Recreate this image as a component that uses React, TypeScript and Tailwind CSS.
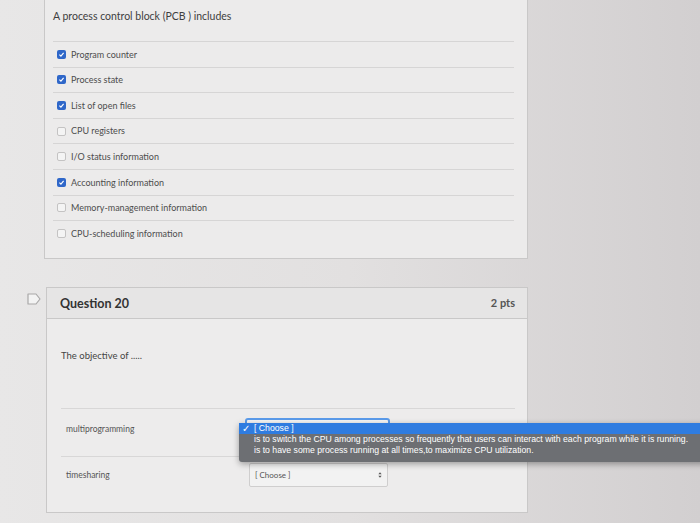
import React from "react";

type Option = { label: string; checked: boolean };

const options: Option[] = [
  { label: "Program counter", checked: true },
  { label: "Process state", checked: true },
  { label: "List of open files", checked: true },
  { label: "CPU registers", checked: false },
  { label: "I/O status information", checked: false },
  { label: "Accounting information", checked: true },
  { label: "Memory-management information", checked: false },
  { label: "CPU-scheduling information", checked: false },
];

const Checkbox = ({ checked }: { checked: boolean }) =>
  checked ? (
    <span className="flex h-[9px] w-[9px] items-center justify-center rounded-[2px] bg-[#2f67c9]">
      <svg viewBox="0 0 10 10" className="h-[7px] w-[7px]">
        <path d="M2 5.2 L4.2 7.4 L8 2.8" fill="none" stroke="#fff" strokeWidth="1.6" />
      </svg>
    </span>
  ) : (
    <span className="h-[9px] w-[9px] rounded-[2px] border border-[#c4c3c3] bg-[#f4f4f4]" />
  );

const App = () => {
  return (
    <div
      className="relative h-[523px] w-[700px] overflow-hidden bg-linear-to-r from-[#e8e7e7] via-[#e2e0e0] to-[#d2cfd0] text-[#444]"
      style={{ fontFamily: "Lato, 'Open Sans', sans-serif" }}
    >
      {/* question 19 */}
      <div className="ml-[44px] w-[484px] border-x border-b border-[#c9c8c8] bg-[#ecebeb] pb-[12px] pl-[8px] pr-[13px]">
        <p className="pt-[8px] text-[10.5px] leading-[16px] text-[#3e3e3e]">A process control block (PCB ) includes</p>
        <ul className="mt-[17px]">
          {options.map((o) => (
            <li key={o.label} className="flex h-[25.6px] items-center gap-[5px] border-t border-[#d6d5d5] pl-[4px]">
              <Checkbox checked={o.checked} />
              <span className="text-[9px] text-[#4d4d4d]">{o.label}</span>
            </li>
          ))}
        </ul>
      </div>

      {/* question 20 */}
      <div className="mt-[28px] flex">
        <div className="w-[46px] pl-[27px] pt-[6px]">
          <svg viewBox="0 0 14 12" className="h-[12px] w-[14px]">
            <path d="M1 1 H9 L13 6 L9 11 H1 Z" fill="#f3f3f3" stroke="#a9a8a8" strokeWidth="1.2" strokeLinejoin="round" />
          </svg>
        </div>
        <div className="w-[482px] border border-[#c9c8c8] bg-[#edecec]">
          <div className="flex h-[31px] items-center justify-between border-b border-[#c9c8c8] bg-[#e6e5e5] pl-[13px] pr-[12px]">
            <span className="mt-[4px] text-[12.5px] font-bold text-[#333]">Question 20</span>
            <span className="text-[11px] font-bold text-[#555]">2 pts</span>
          </div>
          <div className="pl-[14px] pr-[12px]">
            <p className="pt-[30px] text-[9.5px] text-[#444]">The objective of .....</p>
            <div className="mt-[45px] border-t border-[#d8d7d7]">
              <div className="flex h-[47px] items-start pt-[9px] pl-[5px]">
                <span className="w-[179px] pt-[5px] text-[8.5px] text-[#555]">multiprogramming</span>
                <div className="h-[24px] w-[145px] rounded-[3px] border-2 border-[#5b9bea] bg-[#f5f5f5]" />
              </div>
              <div className="flex h-[56px] items-start border-t border-[#d8d7d7] pt-[6px] pl-[5px]">
                <span className="w-[183px] pt-[6px] text-[8.5px] text-[#555]">timesharing</span>
                <div className="flex h-[24px] w-[139px] items-center justify-between rounded-[2px] border border-[#cfcece] bg-[#f2f2f2] pl-[5px] pr-[5px]">
                  <span className="text-[8px] text-[#555]">[ Choose ]</span>
                  <svg viewBox="0 0 6 10" className="h-[8px] w-[4px]">
                    <path d="M0.5 4 L3 1 L5.5 4 Z M0.5 6 L3 9 L5.5 6 Z" fill="#555" />
                  </svg>
                </div>
              </div>
            </div>
          </div>
        </div>
      </div>

      {/* open select menu */}
      <div
        className="absolute left-[239px] top-[423px] w-[470px] rounded-[3px] bg-[#6d6f73] pb-[6px] text-[8.7px] leading-[11px] text-white shadow-[0_2px_6px_rgba(0,0,0,0.35)]"
        style={{ fontFamily: "'Liberation Sans', Arial, sans-serif" }}
      >
        <div className="flex items-center bg-[#2f7ce0] pl-[3px]">
          <span className="w-[12px] text-[10px]">✓</span>
          <span>[ Choose ]</span>
        </div>
        <div className="pl-[15px]">is to switch the CPU among processes so frequently that users can interact with each program while it is running.</div>
        <div className="pl-[15px]">is to have some process running at all times,to maximize CPU utilization.</div>
      </div>
    </div>
  );
};

export default App;
